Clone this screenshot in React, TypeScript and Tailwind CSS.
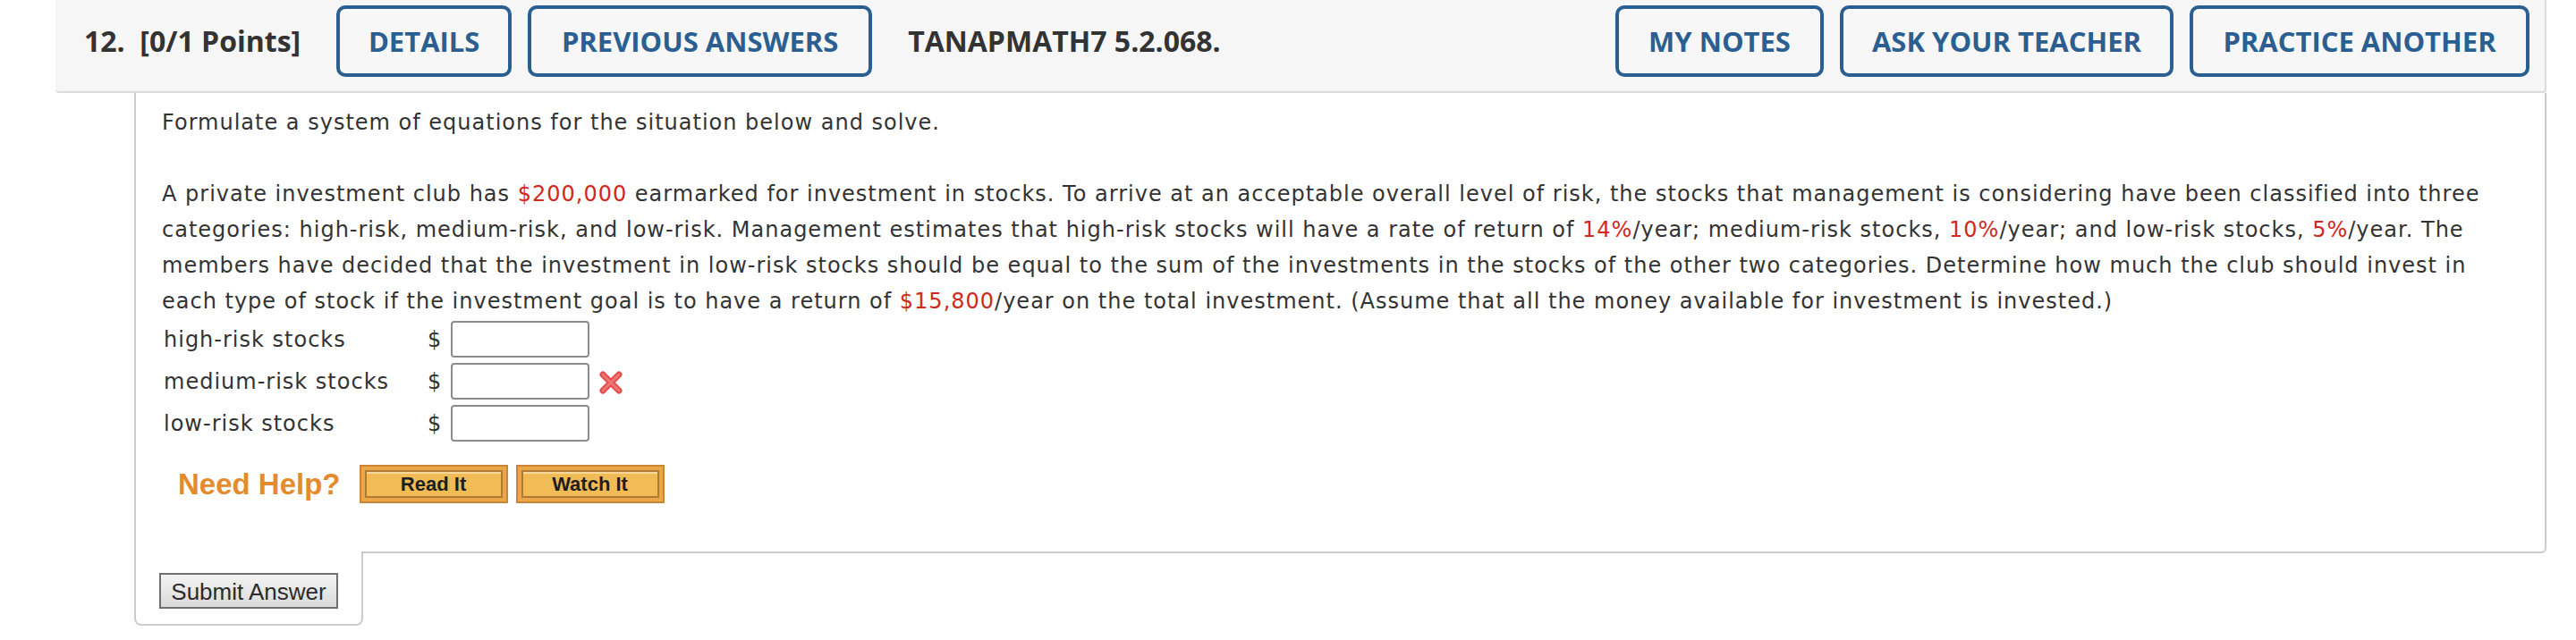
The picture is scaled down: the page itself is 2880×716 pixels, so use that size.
import React from 'react';

const headerFont = {fontFamily: '"Open Sans", "Liberation Sans", sans-serif'};

const HeaderButton: React.FC<{ label: string; width: string }> = ({label, width}) => (
    <div
        className={`h-[80px] ${width} flex items-center justify-center rounded-[10px] border-4 border-[#2b5f91] bg-[#f7f7f7] text-[31px] font-bold text-[#2b5f91] whitespace-nowrap`}>
        {label}
    </div>
);

const Red: React.FC<{ children: React.ReactNode }> = ({children}) => (
    <span className="text-[#cf2a1c]">{children}</span>
);

const WrongMark = () => (
    <svg width="28" height="26" viewBox="0 0 28 26">
        <path d="M5 4 L23 22 M23 4 L5 22" stroke="#e04e4e" strokeWidth="7" strokeLinecap="round"/>
        <path d="M5 4 L23 22 M23 4 L5 22" stroke="#ef7474" strokeWidth="3" strokeLinecap="round"/>
    </svg>
);

const AnswerRow: React.FC<{ label: string; wrong?: boolean }> = ({label, wrong}) => (
    <div className="flex h-[41px] items-center">
        <div className="w-[297px] pl-[2px] whitespace-nowrap">{label}</div>
        <div className="w-[26px]">$</div>
        <div className="h-[41px] w-[155px] rounded-[4px] border-2 border-[#8c8c8c] bg-white"></div>
        {wrong && <div className="ml-[10px] mt-[2px]"><WrongMark/></div>}
    </div>
);

const HelpButton: React.FC<{ label: string }> = ({label}) => (
    <div className="h-[43px] w-[166px] border-2 border-[#c98637] bg-[#eaa748] p-[4px]">
        <div
            className="flex h-full items-center justify-center border-2 border-[#b07a35] bg-[#f1bb55] text-[22px] font-bold tracking-normal text-[#1e1e1e] shadow-[inset_0_2px_0_#f8d79a]"
            style={{fontFamily: '"Liberation Sans", Arial, sans-serif'}}>
            {label}
        </div>
    </div>
);

export default function App() {
    return (
        <div className="h-[716px] w-[2880px] overflow-hidden bg-white">
            <div
                className="ml-[62px] flex h-[104px] w-[2785px] items-start rounded-b-[4px] border-b-2 border-r-2 border-[#dcdcdc] bg-[#f6f6f6] pl-[32px] pr-[17px] pt-[6px]"
                style={headerFont}>
                <div className="flex h-[80px] items-center text-[32px] font-bold text-[#333333] whitespace-nowrap">
                    12.&nbsp; [0/1 Points]
                </div>
                <div className="ml-[40px] flex gap-[18px]">
                    <HeaderButton label="DETAILS" width="w-[196px]"/>
                    <HeaderButton label="PREVIOUS ANSWERS" width="w-[385px]"/>
                </div>
                <div className="ml-[40px] flex h-[80px] items-center text-[32px] font-bold text-[#333333] whitespace-nowrap">
                    TANAPMATH7 5.2.068.
                </div>
                <div className="ml-auto flex gap-[18px]">
                    <HeaderButton label="MY NOTES" width="w-[233px]"/>
                    <HeaderButton label="ASK YOUR TEACHER" width="w-[373px]"/>
                    <HeaderButton label="PRACTICE ANOTHER" width="w-[380px]"/>
                </div>
            </div>

            <div className="ml-[150px] w-[2697px]">
                <div
                    className="h-[515px] rounded-br-[6px] border-x-2 border-b-2 border-[#cccccc] pl-[29px] pt-[13px] text-[24px] leading-[40px] tracking-[1px] text-[#333333]"
                    style={{fontFamily: '"DejaVu Sans", Verdana, sans-serif'}}>
                    <div className="whitespace-nowrap">
                        Formulate a system of equations for the situation below and solve.
                    </div>
                    <div className="h-[40px]"></div>
                    <div className="whitespace-nowrap">
                        A private investment club has <Red>$200,000</Red> earmarked for investment in stocks. To arrive
                        at an acceptable overall level of risk, the stocks that management is considering have been
                        classified into three
                    </div>
                    <div className="whitespace-nowrap">
                        categories: high-risk, medium-risk, and low-risk. Management estimates that high-risk stocks will
                        have a rate of return of <Red>14%</Red>/year; medium-risk stocks, <Red>10%</Red>/year; and
                        low-risk stocks, <Red>5%</Red>/year. The
                    </div>
                    <div className="whitespace-nowrap">
                        members have decided that the investment in low-risk stocks should be equal to the sum of the
                        investments in the stocks of the other two categories. Determine how much the club should invest
                        in
                    </div>
                    <div className="whitespace-nowrap">
                        each type of stock if the investment goal is to have a return of <Red>$15,800</Red>/year on the
                        total investment. (Assume that all the money available for investment is invested.)
                    </div>

                    <div className="mt-[2px] flex flex-col gap-[6px]">
                        <AnswerRow label="high-risk stocks"/>
                        <AnswerRow label="medium-risk stocks" wrong/>
                        <AnswerRow label="low-risk stocks"/>
                    </div>

                    <div className="ml-[18px] mt-[26px] flex h-[43px] items-center">
                        <div className="text-[33px] font-bold leading-none tracking-normal text-[#e68a2e]"
                             style={{fontFamily: '"Liberation Sans", Arial, sans-serif'}}>
                            Need Help?
                        </div>
                        <div className="ml-[21px] flex gap-[9px]">
                            <HelpButton label="Read It"/>
                            <HelpButton label="Watch It"/>
                        </div>
                    </div>
                </div>

                <div
                    className="-mt-[2px] h-[83px] w-[256px] rounded-b-[8px] border-x-2 border-b-2 border-[#cccccc] bg-white pl-[26px] pt-[24px]">
                    <button
                        className="h-[40px] w-[200px] border-2 border-[#6f6f6f] bg-gradient-to-b from-[#f4f4f4] to-[#dadada] text-[26px] text-[#2b2b2b]"
                        style={{fontFamily: '"Liberation Sans", Arial, sans-serif'}}>
                        Submit Answer
                    </button>
                </div>
            </div>
        </div>
    );
}
